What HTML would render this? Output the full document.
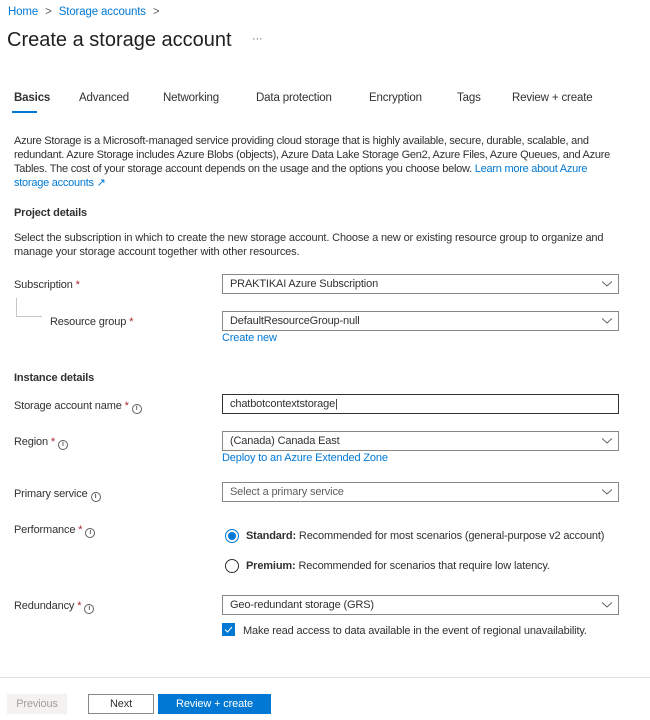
<!DOCTYPE html>
<html><head><meta charset="utf-8"><style>
*{margin:0;padding:0;box-sizing:border-box}
body{width:650px;height:720px;background:#fff;font-family:"Liberation Sans",sans-serif;font-size:11px;color:#323130;position:relative;overflow:hidden;letter-spacing:-0.15px}
.a{position:absolute;white-space:nowrap}
.link{color:#0078d4}
.b{font-weight:bold}
.req{color:#a4262c}
.dd{position:absolute;left:222px;width:397px;height:20px;border:1px solid #8a8886;padding:3px 0 0 7px}
.dd svg{position:absolute;right:6px;top:6px}
.info{display:inline-block;width:10px;height:10px;border:1px solid #605e5c;border-radius:50%;font-size:7px;line-height:8px;text-align:center;vertical-align:-1px;margin-left:3px;color:#605e5c;font-weight:bold;letter-spacing:0}
.tab{position:absolute;top:92px;font-size:11.5px;color:#323130}
.btn{position:absolute;top:694px;height:20px;text-align:center;line-height:20px;font-size:11px}
</style></head><body>
<div class="a link" style="left:8px;top:6px;font-size:11.5px">Home <span style="color:#605e5c;margin:0 4px">&gt;</span> Storage accounts <span style="color:#605e5c;margin-left:4px">&gt;</span></div>
<div class="a" style="left:7px;top:29px;font-size:20px;color:#201f1e;letter-spacing:0">Create a storage account</div>
<div class="a" style="left:252px;top:33px;color:#605e5c">···</div>

<div class="tab" style="left:14px;font-weight:bold">Basics</div>
<div style="position:absolute;left:12px;top:111px;width:25px;height:2px;background:#0078d4"></div>
<div class="tab" style="left:79px">Advanced</div>
<div class="tab" style="left:163px">Networking</div>
<div class="tab" style="left:256px">Data protection</div>
<div class="tab" style="left:369px">Encryption</div>
<div class="tab" style="left:457px">Tags</div>
<div class="tab" style="left:512px">Review + create</div>

<div class="a" style="left:14px;top:134px;line-height:14px;letter-spacing:-0.25px">Azure Storage is a Microsoft-managed service providing cloud storage that is highly available, secure, durable, scalable, and<br>redundant. Azure Storage includes Azure Blobs (objects), Azure Data Lake Storage Gen2, Azure Files, Azure Queues, and Azure<br>Tables. The cost of your storage account depends on the usage and the options you choose below. <span class="link">Learn more about Azure</span><br><span class="link">storage accounts ↗</span></div>

<div class="a b" style="left:14px;top:207px">Project details</div>
<div class="a" style="left:14px;top:231px;line-height:14px">Select the subscription in which to create the new storage account. Choose a new or existing resource group to organize and<br>manage your storage account together with other resources.</div>

<div class="a" style="left:14px;top:279px">Subscription <span class="req">*</span></div>
<div class="dd" style="top:274px">PRAKTIKAI Azure Subscription<svg width="10" height="6"><path d="M0 0.5L5 5L10 0.5" fill="none" stroke="#605e5c"/></svg></div>
<div style="position:absolute;left:16px;top:298px;width:26px;height:19px;border-left:1px solid #c8c6c4;border-bottom:1px solid #c8c6c4"></div>
<div class="a" style="left:50px;top:316px">Resource group <span class="req">*</span></div>
<div class="dd" style="top:311px">DefaultResourceGroup-null<svg width="10" height="6"><path d="M0 0.5L5 5L10 0.5" fill="none" stroke="#605e5c"/></svg></div>
<div class="a link" style="left:222px;top:332px">Create new</div>

<div class="a b" style="left:14px;top:372px">Instance details</div>
<div class="a" style="left:14px;top:400px">Storage account name <span class="req">*</span><span class="info">i</span></div>
<div class="dd" style="top:394px;border:1px solid #323130;height:20px">chatbotcontextstorage|</div>
<div class="a" style="left:14px;top:436px">Region <span class="req">*</span><span class="info">i</span></div>
<div class="dd" style="top:431px">(Canada) Canada East<svg width="10" height="6"><path d="M0 0.5L5 5L10 0.5" fill="none" stroke="#605e5c"/></svg></div>
<div class="a link" style="left:222px;top:452px">Deploy to an Azure Extended Zone</div>
<div class="a" style="left:14px;top:488px">Primary service<span class="info">i</span></div>
<div class="dd" style="top:482px;color:#605e5c">Select a primary service<svg width="10" height="6"><path d="M0 0.5L5 5L10 0.5" fill="none" stroke="#605e5c"/></svg></div>
<div class="a" style="left:14px;top:524px">Performance <span class="req">*</span><span class="info">i</span></div>
<div style="position:absolute;left:225px;top:529px;width:14px;height:14px;border:1px solid #0078d4;border-radius:50%"><div style="position:absolute;left:2px;top:2px;width:8px;height:8px;border-radius:50%;background:#0078d4"></div></div>
<div class="a" style="left:246px;top:530px"><b>Standard:</b> Recommended for most scenarios (general-purpose v2 account)</div>
<div style="position:absolute;left:225px;top:559px;width:14px;height:14px;border:1px solid #323130;border-radius:50%"></div>
<div class="a" style="left:246px;top:560px"><b>Premium:</b> Recommended for scenarios that require low latency.</div>
<div class="a" style="left:14px;top:600px">Redundancy <span class="req">*</span><span class="info">i</span></div>
<div class="dd" style="top:595px">Geo-redundant storage (GRS)<svg width="10" height="6"><path d="M0 0.5L5 5L10 0.5" fill="none" stroke="#605e5c"/></svg></div>
<div style="position:absolute;left:222px;top:623px;width:13px;height:13px;background:#0078d4"><svg width="13" height="13" style="position:absolute;left:0;top:0"><path d="M3 6.5L5.5 9L10 4" fill="none" stroke="#fff" stroke-width="1"/></svg></div>
<div class="a" style="left:243px;top:625px">Make read access to data available in the event of regional unavailability.</div>

<div style="position:absolute;left:0;top:677px;width:650px;height:1px;background:#e1dfdd"></div>
<div class="btn" style="left:7px;width:60px;background:#f3f2f1;color:#a19f9d">Previous</div>
<div class="btn" style="left:88px;width:66px;border:1px solid #8a8886;line-height:18px;color:#323130">Next</div>
<div class="btn" style="left:158px;width:113px;background:#0078d4;color:#fff">Review + create</div>
</body></html>
